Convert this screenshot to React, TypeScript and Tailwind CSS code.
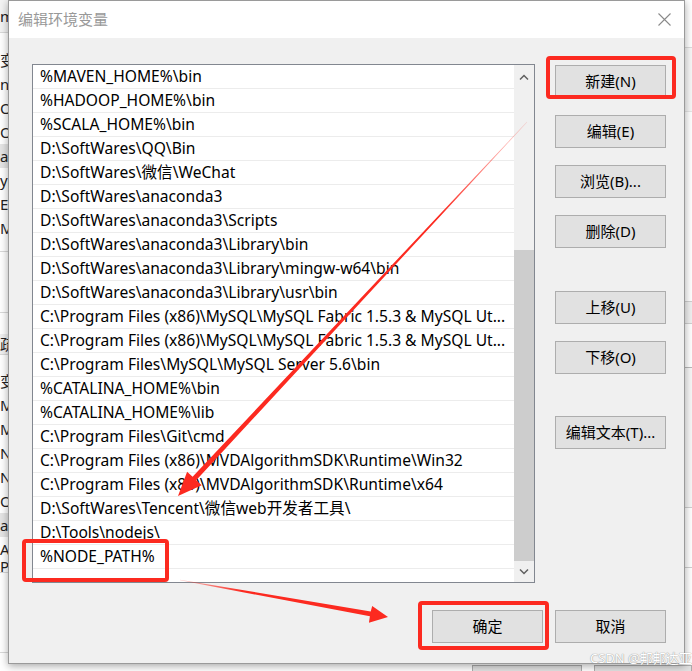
import React from 'react';

const FONT = '"Noto Sans", "Noto Sans CJK SC", sans-serif';

const PATHS = [
    '%MAVEN_HOME%\\bin',
    '%HADOOP_HOME%\\bin',
    '%SCALA_HOME%\\bin',
    'D:\\SoftWares\\QQ\\Bin',
    'D:\\SoftWares\\微信\\WeChat',
    'D:\\SoftWares\\anaconda3',
    'D:\\SoftWares\\anaconda3\\Scripts',
    'D:\\SoftWares\\anaconda3\\Library\\bin',
    'D:\\SoftWares\\anaconda3\\Library\\mingw-w64\\bin',
    'D:\\SoftWares\\anaconda3\\Library\\usr\\bin',
    'C:\\Program Files (x86)\\MySQL\\MySQL Fabric 1.5.3 & MySQL Ut...',
    'C:\\Program Files (x86)\\MySQL\\MySQL Fabric 1.5.3 & MySQL Ut...',
    'C:\\Program Files\\MySQL\\MySQL Server 5.6\\bin',
    '%CATALINA_HOME%\\bin',
    '%CATALINA_HOME%\\lib',
    'C:\\Program Files\\Git\\cmd',
    'C:\\Program Files (x86)\\MVDAlgorithmSDK\\Runtime\\Win32',
    'C:\\Program Files (x86)\\MVDAlgorithmSDK\\Runtime\\x64',
    'D:\\SoftWares\\Tencent\\微信web开发者工具\\',
    'D:\\Tools\\nodejs\\',
    '%NODE_PATH%',
];

// rows of the window behind the dialog, only a sliver shows on the left
const BACK_ROWS: { h: number; text?: string; bg?: string; line?: boolean }[] = [
    { h: 33, text: 'm', bg: '#f3f3f3', line: true },
    { h: 15 },
    { h: 24, text: '变' },
    { h: 24, text: 'nt' },
    { h: 24, text: 'Or' },
    { h: 24, text: 'Or' },
    { h: 24, text: 'a', bg: '#e5e5e5' },
    { h: 24, text: 'y' },
    { h: 24, text: 'E' },
    { h: 24, text: 'M' },
    { h: 12, line: true },
    { h: 61, line: true },
    { h: 21 },
    { h: 21, text: '疏', bg: '#f0f0f0', line: true },
    { h: 14 },
    { h: 24, text: '变' },
    { h: 24, text: 'MY' },
    { h: 24, text: 'MY' },
    { h: 24, text: 'NC' },
    { h: 24, text: 'NU' },
    { h: 24, text: 'OS' },
    { h: 24, text: 'a', bg: '#e5e5e5' },
    { h: 24, text: 'A' },
    { h: 12, text: 'P', line: true },
    { h: 80, line: true },
];

function Chevron({ up }: { up?: boolean }) {
    return (
        <svg width="10" height="6" viewBox="0 0 10 6">
            <path
                d={up ? 'M1 5.5 L5 1.5 L9 5.5' : 'M1 0.5 L5 4.5 L9 0.5'}
                fill="none"
                stroke="#606060"
                strokeWidth="1.5"
            />
        </svg>
    );
}

function WinButton({ label, className = '' }: { label: string; className?: string }) {
    return (
        <div
            className={`flex h-[33px] w-[111px] items-center justify-center border border-[#adadad] bg-[#e1e1e1] text-[15px] text-black ${className}`}
        >
            {label}
        </div>
    );
}

function BackWindow() {
    return (
        <div className="absolute inset-0 bg-white">
            <div className="flex w-[8px] flex-col overflow-hidden">
                {BACK_ROWS.map((r, i) => (
                    <div
                        key={i}
                        className={`flex shrink-0 items-center overflow-hidden whitespace-nowrap text-[15px] leading-none text-[#222] ${r.line ? 'border-b border-[#d9d9d9]' : ''}`}
                        style={{ height: r.h, background: r.bg }}
                    >
                        {r.text}
                    </div>
                ))}
            </div>
            <div className="absolute right-0 top-0 flex h-full w-[8px] flex-col">
                <div className="h-[48px] border-b border-[#dcdcdc]" />
                <div className="h-[64px] border-b border-[#e6e6e6] bg-[#f7f7f7]" />
                <div className="h-[190px] border-b border-[#d0d0d0]" />
                <div className="h-[22px] border-b border-[#d0d0d0] bg-[#f0f0f0]" />
                <div className="h-[44px] border-b border-[#b9b9b9]" />
                <div className="h-[140px] border-b border-[#d0d0d0] bg-[#f7f7f7]" />
                <div className="h-[60px] border-b border-[#d0d0d0]" />
            </div>
            <div className="absolute bottom-0 left-[472px] h-[6px] w-[110px] border border-b-0 border-[#adadad] bg-[#e1e1e1]" />
            <div className="absolute bottom-0 left-[594px] h-[6px] w-[98px] border border-b-0 border-[#adadad] bg-[#e1e1e1]" />
        </div>
    );
}

export default function App() {
    return (
        <div className="relative h-[671px] w-[692px] overflow-hidden" style={{ fontFamily: FONT }}>
            <BackWindow />

            {/* Dialog */}
            <div className="absolute left-[8px] top-0 flex h-[664px] w-[677px] flex-col border border-[#9a9a9a] bg-[#f0f0f0] shadow-[0_2px_8px_rgba(0,0,0,0.35)]">
                <div className="flex h-[37px] shrink-0 items-center justify-between bg-white pl-[9px] pr-[13px]">
                    <span className="text-[15px] text-[#999999]">编辑环境变量</span>
                    <svg width="13" height="13" viewBox="0 0 13 13">
                        <path d="M0.5 0.5 L12.5 12.5 M12.5 0.5 L0.5 12.5" stroke="#8a8a8a" strokeWidth="1.1" />
                    </svg>
                </div>

                <div className="flex gap-[20px] pl-[23px] pt-[26px]">
                    {/* path list */}
                    <div className="flex h-[519px] w-[503px] border border-[#828790] bg-white">
                        <div className="flex w-[481px] flex-col overflow-hidden">
                            {PATHS.map((p, i) => (
                                <div
                                    key={i}
                                    className="flex h-[24px] shrink-0 items-center whitespace-nowrap border-b border-[#ececec] pl-[7px] text-[15.6px] leading-none text-black"
                                >
                                    {p}
                                </div>
                            ))}
                        </div>
                        <div className="flex w-[20px] flex-col bg-[#f0f0f0]">
                            <div className="flex h-[24px] items-center justify-center">
                                <Chevron up />
                            </div>
                            <div className="h-[161px]" />
                            <div className="h-[311px] bg-[#cdcdcd]" />
                            <div className="flex flex-1 items-center justify-center">
                                <Chevron />
                            </div>
                        </div>
                    </div>

                    {/* right buttons */}
                    <div className="flex flex-col pt-[1px]">
                        <WinButton label="新建(N)" />
                        <WinButton label="编辑(E)" className="mt-[17px]" />
                        <WinButton label="浏览(B)..." className="mt-[17px]" />
                        <WinButton label="删除(D)" className="mt-[17px]" />
                        <WinButton label="上移(U)" className="mt-[43px]" />
                        <WinButton label="下移(O)" className="mt-[17px]" />
                        <WinButton label="编辑文本(T)..." className="mt-[42px]" />
                    </div>
                </div>

                <div className="flex justify-end gap-[12px] pr-[18px] pt-[27px]">
                    <WinButton label="确定" className="w-[110px]" />
                    <WinButton label="取消" className="w-[110px]" />
                </div>
            </div>

            {/* annotations */}
            <div className="absolute left-[546px] top-[56px] h-[43px] w-[130px] rounded-[4px] border-4 border-[#fc2a20]" />
            <div className="absolute left-[22px] top-[539px] h-[43px] w-[147px] rounded-[4px] border-4 border-[#fc2a20]" />
            <div className="absolute left-[418px] top-[601px] h-[49px] w-[131px] rounded-[4px] border-4 border-[#fc2a20]" />

            <svg className="pointer-events-none absolute inset-0" width="692" height="671" viewBox="0 0 692 671">
                <defs>
                    <linearGradient id="a1" x1="527" y1="122" x2="178" y2="496" gradientUnits="userSpaceOnUse">
                        <stop offset="0" stopColor="#fc2a20" stopOpacity="0.15" />
                        <stop offset="0.25" stopColor="#fc2a20" stopOpacity="1" />
                    </linearGradient>
                    <linearGradient id="a2" x1="180" y1="580" x2="388" y2="617" gradientUnits="userSpaceOnUse">
                        <stop offset="0" stopColor="#fc2a20" stopOpacity="0.2" />
                        <stop offset="0.3" stopColor="#fc2a20" stopOpacity="1" />
                    </linearGradient>
                </defs>
                <polygon
                    points="527.2,122.2 526.8,121.8 192.6,476.8 187.1,471.7 178,496 201.7,485.3 196.2,480.2"
                    fill="url(#a1)"
                />
                <polygon
                    points="180.05,579.7 179.95,580.3 369.9,616.3 368.9,622.7 388,617 372.2,606.0 370.7,611.4"
                    fill="url(#a2)"
                />
            </svg>

            <div className="absolute left-[590px] top-[649px] whitespace-nowrap text-[13px] text-white [text-shadow:0_0_1px_#9a9a9a,0_0_1px_#9a9a9a]">
                CSDN @邦邦达亚
            </div>
        </div>
    );
}
